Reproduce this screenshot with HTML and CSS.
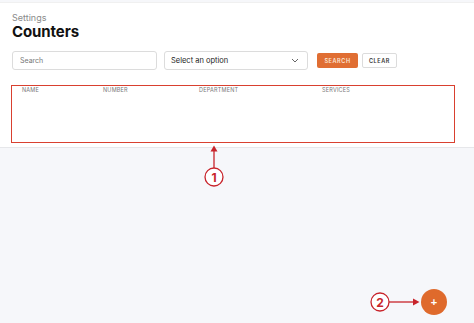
FILE: index.html
```html
<!DOCTYPE html>
<html lang="en">
<head>
  <meta charset="UTF-8">
  <title>Counters</title>
  <link rel="stylesheet" href="styles.css">
</head>
<body>
  <div class="panel">
    <div class="crumb">Settings</div>
    <h1>Counters</h1>
    <div class="filters">
      <input class="search" type="text" placeholder="Search">
      <div class="select">
        <span>Select an option</span>
        <svg width="8" height="5" viewBox="0 0 8 5"><path d="M1 1l3 3 3-3" fill="none" stroke="#666" stroke-width="1"/></svg>
      </div>
      <button class="btn btn-primary">SEARCH</button>
      <button class="btn btn-light">CLEAR</button>
    </div>
    <div class="table">
      <div class="thead">
        <span class="col-name">NAME</span>
        <span class="col-number">NUMBER</span>
        <span class="col-dept">DEPARTMENT</span>
        <span class="col-services">SERVICES</span>
      </div>
    </div>
  </div>

  <button class="fab">+</button>

  <svg class="notes" width="474" height="323" viewBox="0 0 474 323">
    <line x1="214" y1="168" x2="214" y2="150" stroke="#c8242b" stroke-width="1.3"/>
    <path d="M210.5 151.5L214 145.5L217.5 151.5Z" fill="#c8242b"/>
    <circle cx="214" cy="177" r="9" fill="#fff" stroke="#c8242b" stroke-width="1.3"/>
    <text x="214" y="181.5" text-anchor="middle" class="note-num">1</text>
    <line x1="389" y1="302" x2="414" y2="302" stroke="#c8242b" stroke-width="1.3"/>
    <path d="M413 298.5L419.5 302L413 305.5Z" fill="#c8242b"/>
    <circle cx="380" cy="302" r="9" fill="#fff" stroke="#c8242b" stroke-width="1.3"/>
    <text x="380" y="306.5" text-anchor="middle" class="note-num">2</text>
  </svg>
</body>
</html>
```

FILE: styles.css
```css
body {
  margin: 0;
  width: 474px;
  height: 323px;
  background-color: #f6f7fa;
  font-family: Inter, "Open Sans", sans-serif;
  position: relative;
  overflow: hidden;
}
.panel {
  background-color: #fff;
  border-top: 1px solid #f0f0f0;
  border-bottom: 1px solid #e6e7ea;
  margin-top: 2px;
  padding: 9px 19px 4px 11px;
  height: 131px;
}
.crumb {
  font-size: 9px;
  color: #8a8a8a;
  margin-left: 1px;
}
h1 {
  margin: 0 0 0 1px;
  font-size: 15px;
  font-weight: 700;
  color: #111;
  letter-spacing: -0.1px;
  line-height: 18px;
}
.filters {
  display: flex;
  align-items: center;
  margin-top: 10px;
  margin-left: 1px;
}
.search {
  box-sizing: border-box;
  width: 145px;
  height: 19px;
  border: 1px solid #dcdcdc;
  border-radius: 3px;
  padding: 0 7px;
  font-family: inherit;
  font-size: 7px;
  margin: 0;
}
.search::placeholder {
  color: #777;
}
.select {
  box-sizing: border-box;
  width: 144px;
  height: 19px;
  margin-left: 7px;
  border: 1px solid #dcdcdc;
  border-radius: 3px;
  padding: 0 8px 0 6px;
  display: flex;
  align-items: center;
  justify-content: space-between;
  font-size: 7.5px;
  color: #222;
}
.btn {
  box-sizing: border-box;
  height: 15px;
  font-family: inherit;
  font-size: 5.5px;
  font-weight: 600;
  letter-spacing: 0.6px;
  border-radius: 2px;
  padding: 0;
  cursor: pointer;
}
.btn-primary {
  width: 41px;
  margin-left: 9px;
  background-color: #e06e33;
  color: #fde8da;
  border: none;
}
.btn-light {
  width: 35px;
  margin-left: 4px;
  background-color: #fff;
  color: #333;
  border: 1px solid #dcdcdc;
}
.table {
  margin-top: 15px;
  height: 58px;
  box-sizing: border-box;
  border: 1.5px solid #d9402f;
}
.thead {
  display: flex;
  font-size: 5.5px;
  color: #777;
  letter-spacing: 0.2px;
  padding-top: 1px;
}
.col-name {
  margin-left: 10px;
  width: 81px;
}
.col-number {
  width: 96px;
}
.col-dept {
  width: 123px;
}
.fab {
  position: absolute;
  left: 421px;
  top: 289px;
  width: 26px;
  height: 26px;
  border-radius: 50%;
  border: none;
  background-color: #df6a2c;
  color: #fff;
  font-size: 11px;
  font-weight: 700;
  line-height: 26px;
  padding: 0;
}
.notes {
  position: absolute;
  left: 0;
  top: 0;
  pointer-events: none;
}
.note-num {
  font-family: Inter, sans-serif;
  font-size: 12px;
  font-weight: 700;
  fill: #c8242b;
}
```
